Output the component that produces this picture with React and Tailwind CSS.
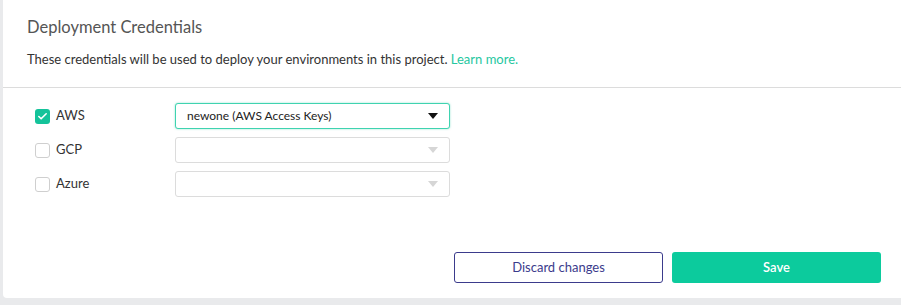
import { Check } from 'lucide-react'

const providers = [
	{ name: 'AWS', checked: true, value: 'newone (AWS Access Keys)' },
	{ name: 'GCP', checked: false, value: '' },
	{ name: 'Azure', checked: false, value: '' },
]

function Checkbox({ checked }) {
	if (checked) {
		return (
			<span className="flex h-[15px] w-[15px] items-center justify-center rounded-[3px] bg-[#14c39a]">
				<Check size={11} strokeWidth={3.5} className="text-white" />
			</span>
		)
	}
	return <span className="block h-[15px] w-[15px] rounded-[3px] border border-[#cfcfcf] bg-white" />
}

function Select({ value, active }) {
	return (
		<div
			className={`flex h-[26px] w-[275px] items-center justify-between rounded-[3px] border bg-white pl-[11px] pr-[11px] ${
				active ? 'border-[#3fd3b0] shadow-[0_0_2px_rgba(20,195,154,0.5)]' : 'border-[#dcdcdc]'
			}`}
		>
			<span className="text-[12px] text-[#222]">{value}</span>
			<span
				className={`h-0 w-0 border-x-[5px] border-t-[6px] border-x-transparent ${
					active ? 'border-t-[#111]' : 'border-t-[#d6d6d6]'
				}`}
			/>
		</div>
	)
}

export default function App() {
	return (
		<div className="h-[305px] w-[901px] bg-[#e9eaec] pl-[3px] font-['Lato',sans-serif]">
			<div className="flex h-[298px] flex-col rounded-bl-[4px] bg-white">
				<div className="border-b border-[#dcdcdc] px-[24px] pb-[19px] pt-[15px]">
					<h1 className="text-[16.5px] leading-[24px] text-[#555]">Deployment Credentials</h1>
					<p className="mt-[11px] text-[13px] leading-[18px] text-[#333]">
						These credentials will be used to deploy your environments in this project.{' '}
						<span className="text-[#25c7a0]">Learn more.</span>
					</p>
				</div>
				<div className="flex flex-col gap-[8px] pl-[32px] pt-[15px]">
					{providers.map((p) => (
						<div key={p.name} className="flex items-center">
							<div className="flex w-[140px] items-center gap-[6px]">
								<Checkbox checked={p.checked} />
								<span className="text-[13px] text-[#333]">{p.name}</span>
							</div>
							<Select value={p.value} active={p.checked} />
						</div>
					))}
				</div>
				<div className="mt-auto flex justify-end gap-[9px] pb-[15px] pr-[20px]">
					<button className="h-[31px] w-[209px] rounded-[3px] border border-[#3b3b8c] bg-white text-[13px] text-[#3b3b8c]">
						Discard changes
					</button>
					<button className="h-[31px] w-[209px] rounded-[3px] bg-[#0ccb9d] text-[13px] font-semibold text-white">
						Save
					</button>
				</div>
			</div>
		</div>
	)
}
